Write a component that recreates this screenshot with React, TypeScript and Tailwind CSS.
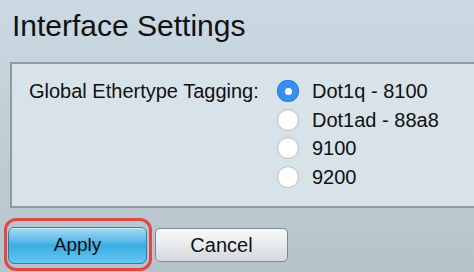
import React, { useState } from 'react'

const options = ['Dot1q - 8100', 'Dot1ad - 88a8', '9100', '9200']

const Radio: React.FC<{ checked: boolean }> = ({ checked }) =>
  checked ? (
    <span className="w-[22px] h-[22px] rounded-full bg-[#3a8ef0] flex items-center justify-center shadow-[inset_0_0_0_1px_#2f7fe0]">
      <span className="w-[7px] h-[7px] rounded-full bg-white" />
    </span>
  ) : (
    <span className="w-[22px] h-[22px] rounded-full bg-white border border-[#b9bec3] shadow-[inset_0_1px_1px_rgba(0,0,0,0.06)]" />
  )

const App: React.FC = () => {
  const [selected, setSelected] = useState(0)

  return (
    <div
      className="w-[474px] h-[272px] overflow-hidden bg-gradient-to-b from-[#cad9e3] to-[#b7c3cb] text-[#111]"
      style={{ fontFamily: '"Liberation Sans", Arial, sans-serif' }}
    >
      <h1 className="h-[40px] pt-[11px] pl-[12px] text-[30px] leading-none font-normal">Interface Settings</h1>

      {/* settings panel */}
      <div className="mt-[22px] ml-[10px] w-[480px] h-[146px] border-2 border-r-0 border-[#8d9ba5] bg-[#d8e2e9] pt-[13px] pl-[17px]">
        <div className="flex">
          <div className="w-[248px] h-[28px] leading-[28px] text-[20px]">Global Ethertype Tagging:</div>
          <div className="flex flex-col">
            {options.map((opt, i) => (
              <label
                key={opt}
                className="flex items-center h-[28.5px] cursor-pointer"
                onClick={() => setSelected(i)}
              >
                <Radio checked={selected === i} />
                <span className="ml-[13px] text-[20px]">{opt}</span>
              </label>
            ))}
          </div>
        </div>
      </div>

      {/* buttons */}
      <div className="flex items-center mt-[10px] pl-[4px]">
        <div className="border-[3px] border-[#e04848] rounded-[12px] pl-[1px] pr-[2px] pt-[6px] pb-[4px]">
          <button className="w-[139px] h-[37px] rounded-[6px] border border-[#2f7eab] bg-gradient-to-b from-[#a4dcf6] via-[#3badE3] to-[#62c6f1] text-[19px] shadow-[inset_0_1px_0_rgba(255,255,255,0.6)]">
            Apply
          </button>
        </div>
        <button className="ml-[3px] w-[133px] h-[34px] rounded-[5px] border border-[#7d8892] bg-gradient-to-b from-[#f7f8f9] via-[#e8ebed] to-[#d3d8dc] text-[20px]">
          Cancel
        </button>
      </div>
    </div>
  )
}

export default App
